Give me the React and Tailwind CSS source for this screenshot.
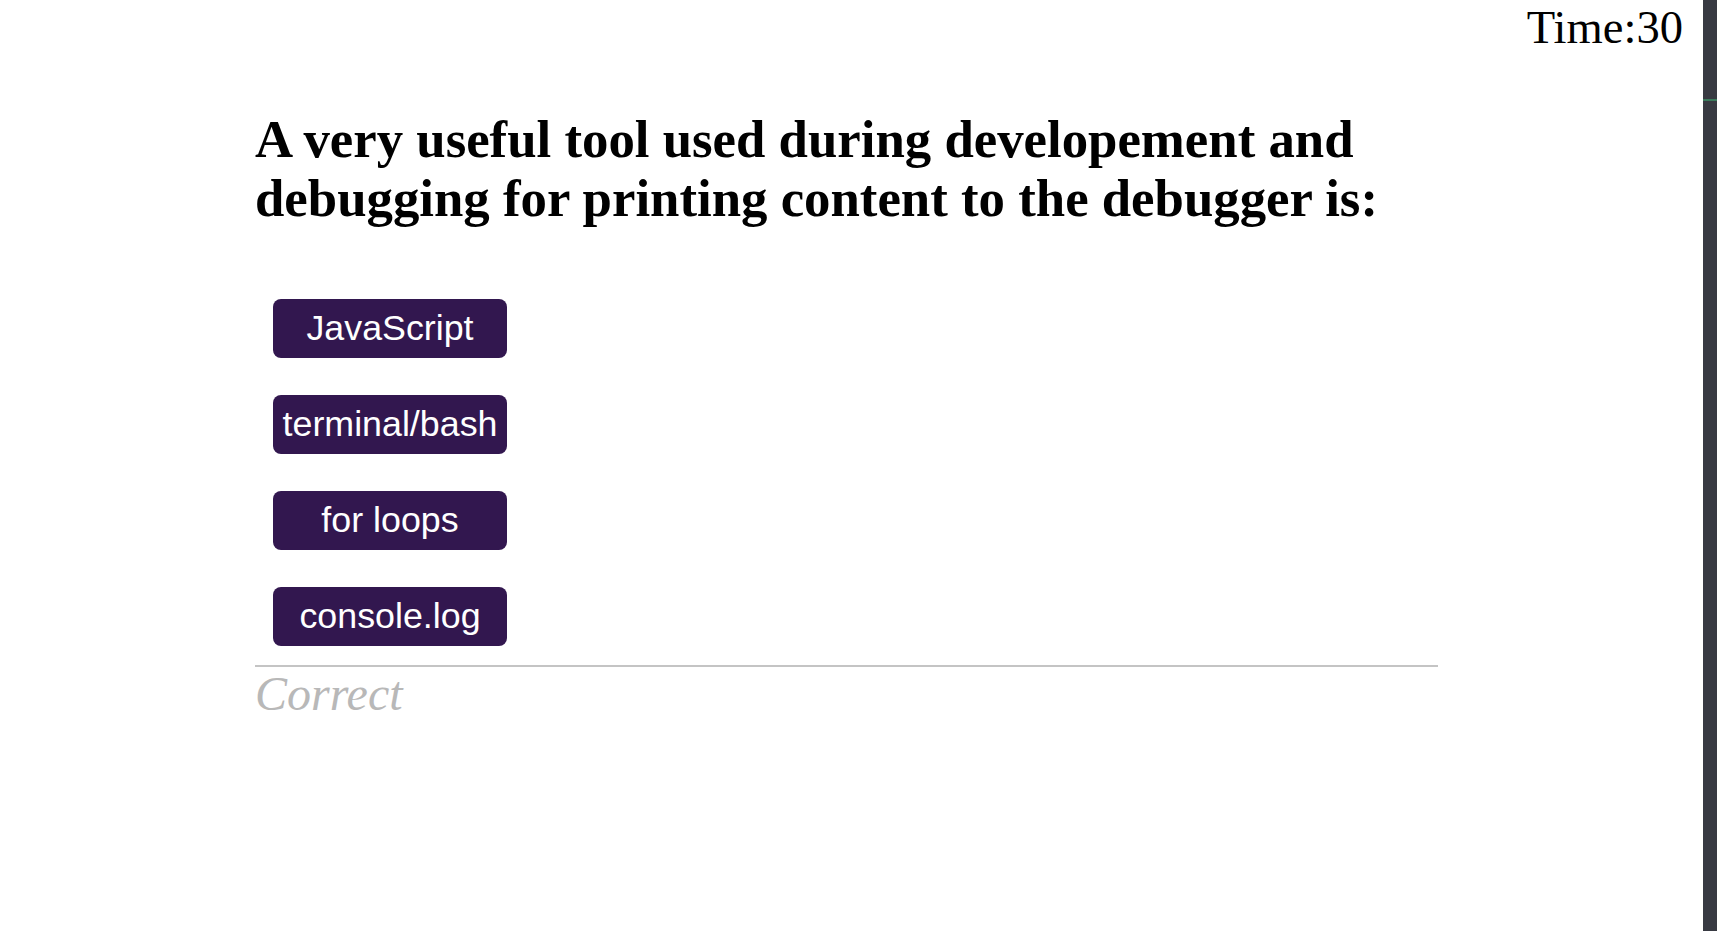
const answers = ['JavaScript', 'terminal/bash', 'for loops', 'console.log'];

const QuizPage = () => {
  return (
    <div className="flex h-[931px] w-full bg-white">
      <main className="flex-1 min-w-0">
        <div className="flex justify-end pr-[20px]">
          <span className="font-['Liberation_Serif',serif] text-[46.6px] leading-[54px] text-black">
            Time:30
          </span>
        </div>

        <div className="ml-[255px] w-[1183px] mt-[56px]">
          <h1 className="font-['Liberation_Serif',serif] font-bold text-[52.8px] leading-[59px] text-black">
            A very useful tool used during developement and debugging for printing content to the debugger is:
          </h1>

          <div className="mt-[71px] ml-[18px] flex flex-col gap-[37px]">
            {answers.map((answer) => (
              <button
                key={answer}
                className="w-[234px] h-[59px] rounded-[8px] bg-[#32174f] text-white font-['Liberation_Sans',Arial,sans-serif] text-[35.8px] leading-none flex items-center justify-center"
              >
                {answer}
              </button>
            ))}
          </div>

          <div className="mt-[19px] h-[2px] bg-[#c4c4c4]" />
          <p className="font-['Liberation_Serif',serif] italic text-[48px] leading-[54px] text-[#b8b8b8]">
            Correct
          </p>
        </div>
      </main>

      <div className="w-[14px] shrink-0 bg-[#383a42] flex flex-col">
        <div className="mt-[99px] h-[2px] bg-[#3b7a5c]" />
      </div>
    </div>
  );
};

export default function App() {
  return <QuizPage />;
}
